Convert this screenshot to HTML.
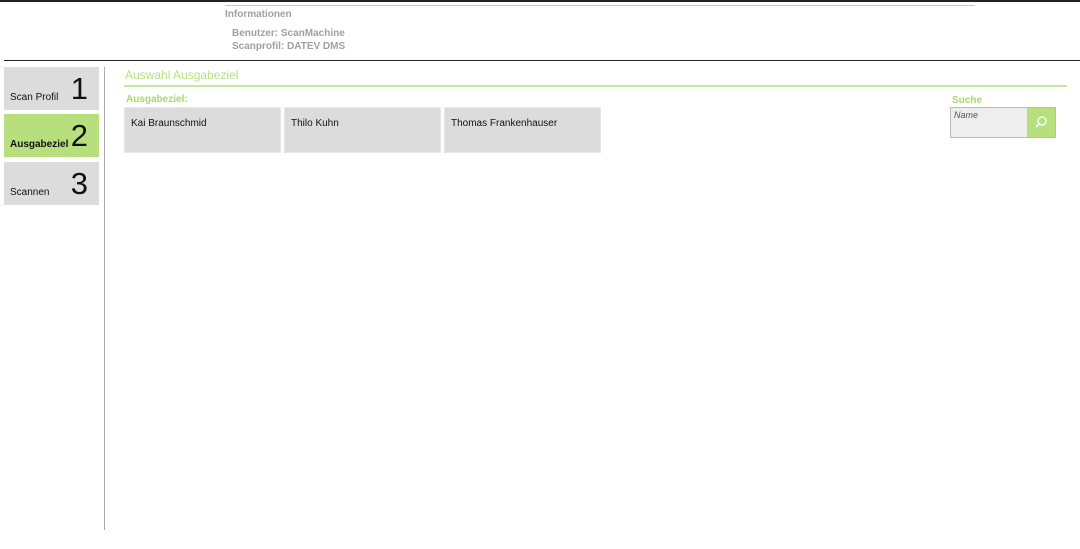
<!DOCTYPE html><html><head><style>
body{margin:0;width:1080px;height:549px;background:#fff;font-family:"Liberation Sans",sans-serif;position:relative;overflow:hidden}
div{position:absolute;box-sizing:border-box}
.g{color:#a0a0a0;font-weight:bold;font-size:10px}
.nav{left:4px;width:95px;height:43px;background:#dcdcdc}
.nav .l{left:6px;bottom:7px;font-size:10px;color:#111}
.nav .n{right:11px;top:4px;font-size:31px;color:#111;line-height:36px}
.t{top:107px;width:157px;height:46px;background:#dcdcdc;border:1px solid #e6e6e6;font-size:10px;color:#111;padding:9px 6px}
</style></head><body>
<div style="left:0;top:0;width:1080px;height:2px;background:#222"></div>
<div style="left:225px;top:5px;width:750px;height:1px;background:#c8c8c8"></div>
<div class="g" style="left:225px;top:9px">Informationen</div>
<div class="g" style="left:232px;top:28px">Benutzer: ScanMachine</div>
<div class="g" style="left:232px;top:41px">Scanprofil: DATEV DMS</div>
<div style="left:4px;top:60px;width:1076px;height:1px;background:#222"></div>
<div class="nav" style="top:67px"><div class="l">Scan Profil</div><div class="n">1</div></div>
<div class="nav" style="top:114px;background:#b7df7d"><div class="l" style="font-weight:bold">Ausgabeziel</div><div class="n">2</div></div>
<div class="nav" style="top:162px"><div class="l">Scannen</div><div class="n">3</div></div>
<div style="left:104px;top:67px;width:1px;height:463px;background:#aaa"></div>
<div style="left:125px;top:68px;font-size:12px;color:#b7df7d">Auswahl Ausgabeziel</div>
<div style="left:124px;top:85px;width:943px;height:2px;background:#c6e89a"></div>
<div style="left:126px;top:94px;font-size:10px;font-weight:bold;color:#a6d96a">Ausgabeziel:</div>
<div class="t" style="left:124px;padding-top:10px">Kai Braunschmid</div>
<div class="t" style="left:284px;padding-top:10px">Thilo Kuhn</div>
<div class="t" style="left:444px;padding-top:10px">Thomas Frankenhauser</div>
<div style="left:952px;top:95px;font-size:10px;font-weight:bold;color:#a6d96a">Suche</div>
<div style="left:950px;top:107px;width:106px;height:31px;background:#eee;border:1px solid #bbb;font-size:9px;font-style:italic;color:#555;padding:2px 3px">Name</div>
<div style="left:1027px;top:108px;width:28px;height:29px;background:#b7df7d"><svg width="28" height="29" style="position:absolute;left:0;top:0"><circle cx="15" cy="13" r="4" fill="none" stroke="#fff" stroke-width="1.3"/><line x1="12" y1="16" x2="9" y2="19" stroke="#fff" stroke-width="1.5"/></svg></div>
</body></html>
